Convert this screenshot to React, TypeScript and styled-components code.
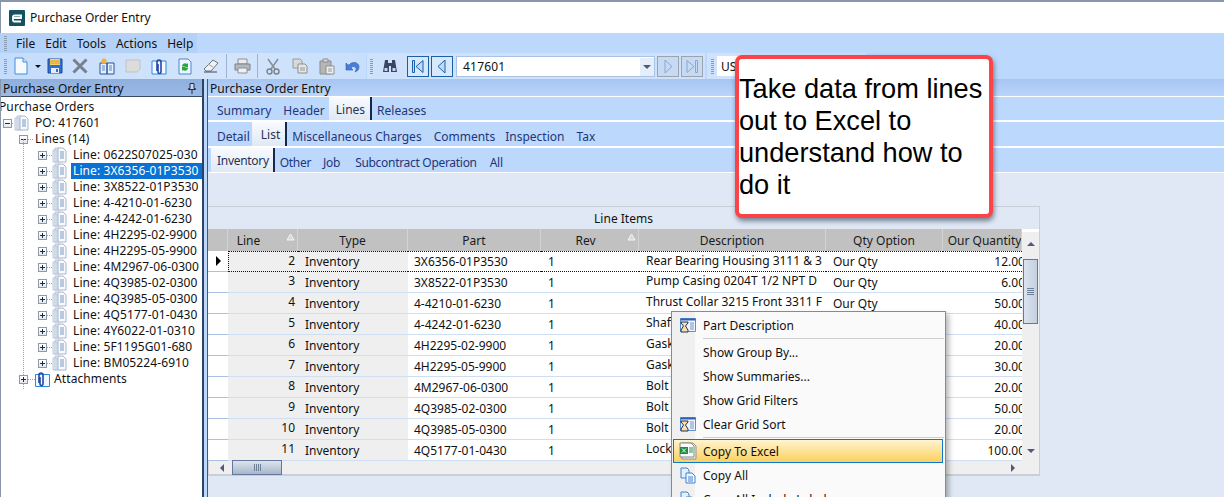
import * as React from "react";
import styled, { createGlobalStyle } from "styled-components";

const UI_FONT = `"Noto Sans", "Liberation Sans", sans-serif`;

const GlobalStyle = createGlobalStyle`
  html, body {
    margin: 0;
    padding: 0;
    overflow: hidden;
    background: #dfe8f4;
  }
  #root {
    width: 1224px;
    height: 497px;
  }
`;

/* icons */

const PageIcon = () => (
  <svg width="16" height="18" viewBox="0 0 16 18">
    <path d="M2 1h8l4 4v12H2z" fill="#f4faff" stroke="#3f8fd8" />
    <path d="M10 1v4h4" fill="#d4e8fb" stroke="#3f8fd8" />
  </svg>
);

const SaveIcon = () => (
  <svg width="16" height="16" viewBox="0 0 16 16">
    <path d="M1 1h14v14H1z" fill="#2f6fd0" stroke="#1c4a9c" />
    <path d="M3 1h10v6H3z" fill="#f6d36a" />
    <path d="M3 3h10M3 5h10" stroke="#d89a2c" />
    <path d="M4 10h8v5H4z" fill="#e8eef8" />
    <path d="M9 11h2v3H9z" fill="#2f6fd0" />
  </svg>
);

const CrossIcon = () => (
  <svg width="16" height="16" viewBox="0 0 16 16">
    <path d="M1.5 1.5l13 13M14.5 1.5l-13 13" stroke="#77808c" strokeWidth="3" />
  </svg>
);

const BookIcon = () => (
  <svg width="16" height="17" viewBox="0 0 16 17">
    <path d="M1 5h7v11H1zM8 5h7v11H8z" fill="#e6f0fc" stroke="#2452a4" />
    <path d="M3 8h3M3 10h3M3 12h3M10 8h3M10 10h3M10 12h3" stroke="#5b84c8" />
    <circle cx="5" cy="3" r="2.6" fill="#f6b132" />
  </svg>
);

const NoteIcon = () => (
  <svg width="16" height="14" viewBox="0 0 16 14">
    <path d="M1 1h14v9l-3 3H1z" fill="#dcdcdc" stroke="#c2c2c2" />
  </svg>
);

const ClipIcon = () => (
  <svg width="16" height="17" viewBox="0 0 16 17">
    <path d="M1 3h14v13H1z" fill="#f3f8ff" stroke="#2a8ae0" />
    <path
      d="M6 13V4a2 2 0 0 1 4 0v10a1.5 1.5 0 0 1-3 0V6"
      fill="none"
      stroke="#2647a8"
      strokeWidth="1.6"
    />
  </svg>
);

const RefreshIcon = () => (
  <svg width="16" height="17" viewBox="0 0 16 17">
    <path d="M2 1h9l3 3v12H2z" fill="#eef6ff" stroke="#4d86c8" />
    <path d="M5 8a3 3 0 0 1 5-2l1-1v4H7l1-1a2 2 0 0 0-2 1z" fill="#26a83a" />
    <path d="M11 10a3 3 0 0 1-5 2l-1 1V9h4l-1 1a2 2 0 0 0 2-1z" fill="#26a83a" />
  </svg>
);

const EraserIcon = () => (
  <svg width="16" height="14" viewBox="0 0 16 14">
    <path d="M10 1l5 3-7 8H3L1 10z" fill="#f2f2f2" stroke="#6b7280" />
    <path d="M1 13h13" stroke="#3d4a5c" />
    <path d="M5 5l5 3" stroke="#9aa3ae" />
  </svg>
);

const PrintIcon = () => (
  <svg width="17" height="16" viewBox="0 0 17 16">
    <path d="M4 1h9v5H4z" fill="#ececec" stroke="#8a8f96" />
    <path d="M1 6h15v6H1z" fill="#b4b8be" stroke="#7d8289" />
    <path d="M4 10h9v5H4z" fill="#f1f1f1" stroke="#8a8f96" />
  </svg>
);

const CutIcon = () => (
  <svg width="14" height="17" viewBox="0 0 14 17">
    <path d="M2 1l7 10M12 1L5 11" stroke="#8a9099" strokeWidth="1.6" />
    <circle cx="3.5" cy="13.5" r="2.5" fill="none" stroke="#7b828c" strokeWidth="1.4" />
    <circle cx="10.5" cy="13.5" r="2.5" fill="none" stroke="#7b828c" strokeWidth="1.4" />
  </svg>
);

const CopyIcon = () => (
  <svg width="16" height="16" viewBox="0 0 16 16">
    <path d="M1 1h7l2 2v7H1z" fill="#d9d9d9" stroke="#9a9a9a" />
    <path d="M6 6h7l2 2v7H6z" fill="#e6e6e6" stroke="#8f8f8f" />
    <path d="M8 10h5M8 12h5" stroke="#9a9a9a" />
  </svg>
);

const PasteIcon = () => (
  <svg width="16" height="17" viewBox="0 0 16 17">
    <path d="M1 3h11v13H1z" fill="#b5b5b5" stroke="#8b8b8b" />
    <path d="M4 1h5v3H4z" fill="#d9d9d9" stroke="#8b8b8b" />
    <path d="M7 8h8v8H7z" fill="#ededed" stroke="#8f8f8f" />
    <path d="M9 11h4M9 13h4" stroke="#9a9a9a" />
  </svg>
);

const UndoIcon = () => (
  <svg width="16" height="14" viewBox="0 0 16 14">
    <path
      d="M4 6c3-4 10-3 10 2 0 3-2 4-4 5 1-2 2-4 0-5-2-1-3 0-4 1l2 2H1V4l2 2z"
      fill="#4a7ed6"
      stroke="#2b5cb0"
      strokeWidth="0.6"
    />
  </svg>
);

const BinocularsIcon = () => (
  <svg width="16" height="14" viewBox="0 0 16 14">
    <path d="M3 1h3v3h4V1h3l2 12H9V7H7v6H1z" fill="#3a4566" />
    <path d="M2.5 9h3v3h-3zM10.5 9h3v3h-3z" fill="#c9d6ee" />
  </svg>
);

const NavArrow = ({ dir, bar, muted }: { dir: "l" | "r"; bar?: boolean; muted?: boolean }) => {
  const fill = muted ? "#c5daf4" : "#bcdcf8";
  const stroke = muted ? "#8aa8cc" : "#1a5fb0";
  return (
    <svg width="14" height="15" viewBox="0 0 14 15">
      {dir === "l" ? (
        <>
          {bar && <path d="M1.5 1.5h2v12h-2z" fill={fill} stroke={stroke} />}
          <path d={bar ? "M12 1.5v12L5 7.5z" : "M10 1v13L3 7.5z"} fill={fill} stroke={stroke} />
        </>
      ) : (
        <>
          <path d={bar ? "M2 1.5v12l7-6z" : "M4 1v13l7-6.5z"} fill={fill} stroke={stroke} />
          {bar && <path d="M10.5 1.5h2v12h-2z" fill={fill} stroke={stroke} />}
        </>
      )}
    </svg>
  );
};

const PinIcon = () => (
  <svg width="8" height="11" viewBox="0 0 8 11">
    <path d="M2 0.5h4v5h1.5v1h-7v-1H2zM4 6.5V11" fill="#c8d8f0" stroke="#20304c" />
  </svg>
);

const TreeDocIcon = () => (
  <svg width="15" height="16" viewBox="0 0 15 16">
    <path d="M1 3h4v12H1zM3 1h4v14H3z" fill="#eaf0f7" stroke="#b9c7d8" />
    <path d="M6 1h5l3 3v11H6z" fill="#f8fafd" stroke="#a4b6cc" />
    <path d="M8 5h4M8 7h4M8 9h4M8 11h4" stroke="#7b97bf" />
  </svg>
);

const AttachIcon = () => (
  <svg width="15" height="15" viewBox="0 0 15 15">
    <path d="M0.5 2.5h14v12H.5z" fill="#f2f8ff" stroke="#2a8ae0" />
    <path
      d="M4 11V3a2 2 0 0 1 4 0v9a1.5 1.5 0 0 1-3 0V5"
      fill="none"
      stroke="#2647a8"
      strokeWidth="1.6"
    />
  </svg>
);

const HourglassIcon = () => (
  <svg width="16" height="15" viewBox="0 0 16 15">
    <path d="M0.5 0.5h15v13H.5z" fill="#f3f7fd" stroke="#5f8ccb" />
    <path d="M.5 .5h15v2H.5z" fill="#2d62b4" />
    <path d="M10 5h4M10 7h4M10 9h4M10 11h4" stroke="#6f93c9" />
    <path d="M1 4h7v1L5.5 8 8 12v2H1v-2l2.5-4L1 5z" fill="#f6e3a4" stroke="#1f2c63" />
  </svg>
);

const ExcelIcon = () => (
  <svg width="18" height="18" viewBox="0 0 18 18">
    <path d="M3 1h11l3 3v13H3z" fill="#f2f2f2" stroke="#8f8f8f" />
    <path d="M1 1h11l3 3v11H1z" fill="#fbfbfb" stroke="#7f8a80" />
    <path d="M1 5h8v7H1z" fill="#1f8a45" />
    <path d="M3 6.5l4 4M7 6.5l-4 4" stroke="#fff" />
    <path d="M10 6h4M10 8h4M10 10h4" stroke="#2d9150" />
  </svg>
);

const CopyPagesIcon = () => (
  <svg width="16" height="17" viewBox="0 0 16 17">
    <path d="M1 1h6l2 2v8H1z" fill="#e4f0fd" stroke="#3f82d0" />
    <path d="M6 6h6l3 3v7H6z" fill="#f2f8ff" stroke="#3f82d0" />
    <path d="M8 10h5M8 12h5M8 14h5" stroke="#3f82d0" />
  </svg>
);

const Triangle = styled.span<{ $dir: "up" | "down" | "left" | "right"; $size?: number; $color?: string }>`
  width: 0;
  height: 0;
  display: block;
  border: ${(p) => p.$size ?? 4}px solid transparent;
  ${(p) =>
    p.$dir === "up"
      ? `border-top: 0; border-bottom-color: ${p.$color ?? "#4f5b7a"};`
      : p.$dir === "down"
      ? `border-bottom: 0; border-top-color: ${p.$color ?? "#4f5b7a"};`
      : p.$dir === "left"
      ? `border-left: 0; border-right-color: ${p.$color ?? "#4f5b7a"};`
      : `border-right: 0; border-left-color: ${p.$color ?? "#4f5b7a"};`}
`;

/* shell */

const Page = styled.div`
  position: relative;
  width: 1224px;
  height: 497px;
  overflow: hidden;
  display: flex;
  flex-direction: column;
  font-family: ${UI_FONT};
  font-size: 12px;
  color: #111;
  background: #bcd8fc;
`;

const TitleBar = styled.header`
  height: 31px;
  flex: none;
  display: flex;
  align-items: center;
  gap: 5px;
  padding-left: 9px;
  background: #fff;
  border-top: 2px solid #8a97ab;
  border-left: 1px solid #8a97ab;
`;

const Logo = styled.svg`
  margin-left: -1px;
  margin-top: 1px;
`;

const MenuStrip = styled.nav`
  height: 20px;
  flex: none;
  display: flex;
  background: #bcd8fc;
`;

const MenuGroup = styled.div`
  width: 197px;
  box-sizing: border-box;
  display: flex;
  align-items: center;
  gap: 9px;
  padding: 1px 0 0 4px;
  background: #b4d1f7;
`;

const Grip = styled.span`
  width: 3px;
  height: 15px;
  flex: none;
  background: repeating-linear-gradient(#8d9bb0 0 1px, transparent 1px 2px);
`;

const MenuItem = styled.span`
  margin-right: 1px;
`;

const ToolStrip = styled.div`
  height: 26px;
  flex: none;
  display: flex;
  align-items: stretch;
  background: #bcd8fc;
`;

const ToolGroup = styled.div<{ $width: number; $after: number; $pad: number; $light?: boolean }>`
  width: ${(p) => p.$width}px;
  box-sizing: border-box;
  flex: none;
  margin-right: ${(p) => p.$after}px;
  display: flex;
  align-items: center;
  padding-left: ${(p) => p.$pad}px;
  background: ${(p) =>
    p.$light ? "#cfe2fb" : "linear-gradient(90deg, #c4dcfb 0%, #d3e5fc 60%, #c8dffb 100%)"};
`;

const ToolButton = styled.span<{ $width?: number; $before?: number }>`
  width: ${(p) => p.$width ?? 26}px;
  height: 22px;
  flex: none;
  margin-left: ${(p) => p.$before ?? 0}px;
  display: flex;
  align-items: center;
  justify-content: center;
`;

const ToolDivider = styled.span`
  width: 1px;
  height: 24px;
  flex: none;
  margin: 0 2px;
  background: #9db3cf;
`;

const NavButton = styled.span<{ $muted?: boolean }>`
  width: 22px;
  height: 21px;
  box-sizing: border-box;
  flex: none;
  margin-right: 2px;
  display: flex;
  align-items: center;
  justify-content: center;
  border: 1px solid ${(p) => (p.$muted ? "#9aa3ae" : "#1a5fa8")};
  background: ${(p) => (p.$muted ? "#c6daf4" : "#d8e8fb")};
`;

const Combo = styled.div`
  width: 199px;
  height: 21px;
  box-sizing: border-box;
  flex: none;
  margin: 0 2px 0 1px;
  display: flex;
  align-items: center;
  justify-content: space-between;
  padding: 1px 0 0 6px;
  background: #fff;
  border: 1px solid #a9c3e6;
  letter-spacing: 0.2px;
`;

const ComboArrow = styled.span`
  width: 14px;
  height: 18px;
  display: flex;
  align-items: center;
  justify-content: center;
  background: #e6eff9;
`;

const CurrencyField = styled.div`
  width: 70px;
  height: 20px;
  margin-left: 3px;
  padding-left: 4px;
  display: flex;
  align-items: center;
  background: #fff;
`;

/* body */

const Body = styled.div`
  flex: 1;
  min-height: 0;
  display: flex;
`;

const LeftPanel = styled.aside`
  flex: none;
  display: flex;
  flex-direction: column;
  border-right: 2px solid #2c4366;
  border-left: 1px solid #8a97ab;
  box-sizing: border-box;
  width: 204px;
`;

const PanelHeader = styled.div<{ $main?: boolean }>`
  height: 17px;
  box-sizing: border-box;
  flex: none;
  display: flex;
  align-items: center;
  justify-content: space-between;
  padding: 1px 6px 0 2px;
  background: ${(p) =>
    p.$main ? "linear-gradient(#a6c5f1, #b9d5fb)" : "linear-gradient(#8fafdd, #9ab9e6)"};
`;

const Tree = styled.div`
  flex: 1;
  overflow: hidden;
  padding-top: 2px;
  background: #fff;
  border-top: 1px solid #3a4a60;
  white-space: nowrap;
  letter-spacing: 0.1px;
`;

const TreeRoot = styled.div`
  height: 16px;
  line-height: 16px;
  margin-left: -2px;
`;

const TreeChildren = styled.div<{ $left: number; $height: number }>`
  position: relative;
  margin-left: ${(p) => p.$left}px;
  &::before {
    content: "";
    position: absolute;
    left: 0;
    top: -8px;
    height: ${(p) => p.$height}px;
    border-left: 1px dotted #9aa3ae;
  }
`;

const TreeRow = styled.div<{ $pad: number }>`
  height: 16px;
  display: flex;
  align-items: center;
  padding-left: ${(p) => p.$pad}px;
`;

const Expander = styled.span`
  position: relative;
  width: 9px;
  height: 9px;
  flex: none;
  box-sizing: border-box;
  border: 1px solid #8f9aa8;
  background: linear-gradient(#fff, #e4e8ee);
  &::before {
    content: "";
    position: absolute;
    left: 1px;
    top: 3px;
    width: 5px;
    height: 1px;
    background: #1d2b4a;
  }
  &::after {
    content: "";
    position: absolute;
    left: 8px;
    top: 3px;
    width: 7px;
    border-top: 1px dotted #9aa3ae;
  }
`;

const ExpanderPlus = styled(Expander)`
  background:
    linear-gradient(#1d2b4a, #1d2b4a) 3px 1px / 1px 5px no-repeat,
    linear-gradient(#fff, #e4e8ee);
`;

const TreeIconSlot = styled.span<{ $before: number }>`
  position: relative;
  width: 15px;
  height: 16px;
  flex: none;
  margin-left: ${(p) => p.$before}px;
  display: flex;
  align-items: center;
  background: #fff;
`;

const TreeLabel = styled.span<{ $selected?: boolean; $offset?: number }>`
  position: relative;
  height: 16px;
  line-height: 16px;
  margin-left: ${(p) => p.$offset ?? 4}px;
  padding: 0 3px 0 2px;
  background: ${(p) => (p.$selected ? "#0a72d4" : "#fff")};
  color: ${(p) => (p.$selected ? "#fff" : "#111")};
  ${(p) => p.$selected && "width: 126px;"}
`;

const Splitter = styled.div`
  width: 3px;
  flex: none;
  background: #bcd8fc;
  border-right: 1px solid #3b5a8e;
`;

const MainPanel = styled.main`
  flex: 1;
  min-width: 0;
  display: flex;
  flex-direction: column;
  background: #dfe8f4;
`;

const TabStack = styled.div`
  flex: none;
  display: flex;
  flex-direction: column;
  gap: 2px;
  padding: 1px 0;
  background: #fff;
`;

const TabRow = styled.div<{ $height: number; $pad: number; $tight?: boolean }>`
  height: ${(p) => p.$height}px;
  display: flex;
  align-items: stretch;
  padding-left: ${(p) => p.$pad}px;
  background: #bcd8fc;
  ${(p) => p.$tight && "letter-spacing: -0.3px;"}
`;

const Tab = styled.span<{ $gap?: number }>`
  display: flex;
  align-items: center;
  box-sizing: border-box;
  margin-right: ${(p) => p.$gap ?? 12}px;
  padding-top: 4px;
  color: #23367a;
  white-space: nowrap;
`;

const ActiveTab = styled.span<{ $left: number; $right: number; $gap: number }>`
  display: flex;
  align-items: center;
  box-sizing: border-box;
  margin: 0 ${(p) => p.$gap}px 0 -2px;
  padding: 1px ${(p) => p.$right}px 0 ${(p) => p.$left}px;
  color: #2b3150;
  white-space: nowrap;
  background: linear-gradient(#f8fbff, #dfe8f4);
  border-right: 2px solid #14284f;
`;

const Content = styled.div`
  flex: 1;
  min-height: 0;
  padding-top: 33px;
`;

const GroupBox = styled.section`
  width: 832px;
  box-sizing: border-box;
  border: 1px solid #c9cfd6;
  border-left: 0;
  border-bottom-width: 2px;
`;

const GroupTitle = styled.div`
  height: 22px;
  display: flex;
  align-items: center;
  justify-content: center;
  color: #111;
`;

const GridWrap = styled.div`
  display: flex;
`;

const GridMain = styled.div`
  width: 814px;
  flex: none;
  display: flex;
  flex-direction: column;
`;

const COLUMNS = "20px 70px 110px 133px 98px 187px 117px 79px";

const HeaderRow = styled.div`
  height: 22px;
  display: grid;
  grid-template-columns: ${COLUMNS};
  background: #c1c1c1;
`;

const HeaderCell = styled.div<{ $left?: number; $right?: number }>`
  position: relative;
  box-sizing: border-box;
  display: flex;
  align-items: center;
  justify-content: center;
  padding: 0 ${(p) => p.$right ?? 0}px 0 ${(p) => p.$left ?? 0}px;
  white-space: nowrap;
  overflow: hidden;
  border-right: 1px solid #d2d2d2;
  color: #1a1a1a;
`;

const SortMark = styled.span`
  position: absolute;
  right: 2px;
  top: 4px;
  display: flex;
`;

const DataRow = styled.div`
  height: 21px;
  display: grid;
  grid-template-columns: ${COLUMNS};
`;

const SelectorCell = styled.div`
  display: flex;
  align-items: center;
  justify-content: center;
  background: #fff;
  border-bottom: 1px solid #a9c1e2;
`;

const Cell = styled.div<{
  $shaded?: boolean;
  $align?: "left" | "right";
  $raised?: boolean;
  $focus?: boolean;
  $first?: boolean;
}>`
  box-sizing: border-box;
  display: flex;
  align-items: center;
  justify-content: ${(p) => (p.$align === "right" ? "flex-end" : "flex-start")};
  padding: ${(p) => (p.$raised ? "0 3px 3px 7px" : "0 3px 0 7px")};
  overflow: hidden;
  white-space: nowrap;
  background: ${(p) => (p.$shaded ? "#efefef" : "#fff")};
  border-bottom: 1px solid #cfdff3;
  ${(p) => p.$focus && "border-top: 1px dotted #111; border-bottom: 1px dotted #111;"}
  ${(p) => p.$first && "border-left: 1px dotted #111;"}
`;

const PartCell = styled(Cell)`
  padding-left: 6px;
`;

const ClippedNumber = styled.span`
  margin-right: -6px;
`;

const HScroll = styled.div`
  height: 13px;
  display: flex;
  align-items: center;
  padding: 0 7px 0 11px;
  background: #efefef;
  border-left: 1px solid #d5d5d5;
`;

const HThumb = styled.span`
  width: 50px;
  height: 15px;
  box-sizing: border-box;
  margin-left: 8px;
  margin-top: -1px;
  display: flex;
  align-items: center;
  justify-content: center;
  background: linear-gradient(#dbe3ee, #a8b6ca);
  border: 1px solid #64789c;
`;

const GripLines = styled.span<{ $vertical?: boolean }>`
  display: block;
  width: 7px;
  height: 7px;
  background: repeating-linear-gradient(
    ${(p) => (p.$vertical ? "180deg" : "90deg")},
    #6e7f99 0 1px,
    transparent 1px 2px
  );
`;

const ScrollSpacer = styled.span`
  flex: 1;
`;

const VScroll = styled.div`
  width: 17px;
  flex: none;
  display: flex;
  flex-direction: column;
  align-items: center;
  background: #efefef;
  border-top: 3px solid #fff;
`;

const VArrow = styled.span<{ $top: number; $bottom: number }>`
  flex: none;
  margin: ${(p) => p.$top}px 0 ${(p) => p.$bottom}px;
`;

const VThumb = styled.span`
  width: 15px;
  height: 65px;
  flex: none;
  box-sizing: border-box;
  display: flex;
  align-items: center;
  justify-content: center;
  background: linear-gradient(90deg, #dbe3ee, #c3cfe0);
  border: 1px solid #64789c;
`;

/* overlays */

const ContextMenu = styled.div`
  position: absolute;
  left: 671px;
  top: 311px;
  width: 275px;
  height: 200px;
  box-sizing: border-box;
  padding: 1px;
  border: 1px solid #8a8a8a;
  background: linear-gradient(90deg, #f0f0f0 23px, #fafafa 23px);
  box-shadow: 3px 3px 5px rgba(0, 0, 0, 0.28);
`;

const MenuRow = styled.div<{ $active?: boolean }>`
  height: 24px;
  box-sizing: border-box;
  display: flex;
  align-items: center;
  ${(p) =>
    p.$active &&
    "background: linear-gradient(#fff4cf, #fbd05f); border: 1px solid #0a78d0; margin-right: 1px;"}
`;

const MenuIconSlot = styled.span<{ $active?: boolean }>`
  width: ${(p) => (p.$active ? 30 : 31)}px;
  flex: none;
  display: flex;
  justify-content: center;
  margin-left: -1px;
`;

const MenuDivider = styled.div`
  height: 1px;
  margin: 1px 0 1px 30px;
  background: #cfcfcf;
`;

const Callout = styled.aside`
  position: absolute;
  left: 735px;
  top: 55px;
  width: 258px;
  height: 163px;
  box-sizing: border-box;
  padding: 14px 0 0 0;
  border: 4px solid #fb4448;
  border-radius: 7px;
  background: #fff;
  box-shadow: 1px 3px 5px rgba(30, 40, 60, 0.55);
  font-family: "Liberation Sans", Arial, sans-serif;
  font-size: 27.2px;
  line-height: 32px;
  color: #000;
`;

type LineRow = { line: number; part: string; desc: string; qty: string };

const rows: LineRow[] = [
  { line: 2, part: "3X6356-01P3530", desc: "Rear Bearing Housing 3111 & 3", qty: "12.00" },
  { line: 3, part: "3X8522-01P3530", desc: "Pump Casing 0204T 1/2 NPT D", qty: "6.00" },
  { line: 4, part: "4-4210-01-6230", desc: "Thrust Collar 3215 Front 3311 F", qty: "50.00" },
  { line: 5, part: "4-4242-01-6230", desc: "Shaft", qty: "40.00" },
  { line: 6, part: "4H2295-02-9900", desc: "Gasket", qty: "20.00" },
  { line: 7, part: "4H2295-05-9900", desc: "Gasket", qty: "30.00" },
  { line: 8, part: "4M2967-06-0300", desc: "Bolt", qty: "20.00" },
  { line: 9, part: "4Q3985-02-0300", desc: "Bolt", qty: "50.00" },
  { line: 10, part: "4Q3985-05-0300", desc: "Bolt", qty: "20.00" },
  { line: 11, part: "4Q5177-01-0430", desc: "Lock", qty: "100.00" },
];

const treeLines = [
  "0622S07025-030",
  "3X6356-01P3530",
  "3X8522-01P3530",
  "4-4210-01-6230",
  "4-4242-01-6230",
  "4H2295-02-9900",
  "4H2295-05-9900",
  "4M2967-06-0300",
  "4Q3985-02-0300",
  "4Q3985-05-0300",
  "4Q5177-01-0430",
  "4Y6022-01-0310",
  "5F1195G01-680",
  "BM05224-6910",
];

const SortArrow = () => (
  <SortMark>
    <svg width="9" height="8" viewBox="0 0 9 8">
      <path d="M4.5 1L8 7H1z" fill="#d8d8d8" stroke="#f6f6f6" />
    </svg>
  </SortMark>
);

export default function App() {
  return (
    <Page>
      <GlobalStyle />
      <TitleBar>
        <Logo width="16" height="16" viewBox="0 0 16 16">
          <rect width="16" height="16" rx="1" fill="#14525f" />
          <path
            d="M4 8h8V5.5H5.2A1.2 1.2 0 0 0 4 6.7v3.6a1.2 1.2 0 0 0 1.2 1.2H12"
            fill="none"
            stroke="#fff"
            strokeWidth="1.8"
          />
        </Logo>
        Purchase Order Entry
      </TitleBar>
      <MenuStrip>
        <MenuGroup>
          <Grip />
          <MenuItem>File</MenuItem>
          <MenuItem>Edit</MenuItem>
          <MenuItem>Tools</MenuItem>
          <MenuItem>Actions</MenuItem>
          <MenuItem>Help</MenuItem>
        </MenuGroup>
      </MenuStrip>
      <ToolStrip>
        <ToolGroup $width={366} $after={1} $pad={4}>
          <Grip />
          <ToolButton $width={28}>
            <PageIcon />
          </ToolButton>
          <ToolButton $width={6}>
            <Triangle $dir="down" $size={3} $color="#111" />
          </ToolButton>
          <ToolButton $width={28}>
            <SaveIcon />
          </ToolButton>
          <ToolButton $width={22}>
            <CrossIcon />
          </ToolButton>
          <ToolButton $before={3}>
            <BookIcon />
          </ToolButton>
          <ToolButton $width={25}>
            <NoteIcon />
          </ToolButton>
          <ToolButton $width={27}>
            <ClipIcon />
          </ToolButton>
          <ToolButton>
            <RefreshIcon />
          </ToolButton>
          <ToolButton>
            <EraserIcon />
          </ToolButton>
          <ToolDivider />
          <ToolButton>
            <PrintIcon />
          </ToolButton>
          <ToolDivider />
          <ToolButton>
            <CutIcon />
          </ToolButton>
          <ToolButton $width={28}>
            <CopyIcon />
          </ToolButton>
          <ToolButton>
            <PasteIcon />
          </ToolButton>
          <ToolButton>
            <UndoIcon />
          </ToolButton>
        </ToolGroup>
        <ToolGroup $width={338} $after={2} $pad={3} $light>
          <Grip />
          <ToolButton $width={34}>
            <BinocularsIcon />
          </ToolButton>
          <NavButton>
            <NavArrow dir="l" bar />
          </NavButton>
          <NavButton>
            <NavArrow dir="l" />
          </NavButton>
          <Combo>
            417601
            <ComboArrow>
              <Triangle $dir="down" $size={4} />
            </ComboArrow>
          </Combo>
          <NavButton $muted>
            <NavArrow dir="r" muted />
          </NavButton>
          <NavButton $muted>
            <NavArrow dir="r" bar muted />
          </NavButton>
        </ToolGroup>
        <ToolGroup $width={159} $after={0} $pad={4} $light>
          <Grip />
          <CurrencyField>USD</CurrencyField>
        </ToolGroup>
      </ToolStrip>
      <Body>
        <LeftPanel>
          <PanelHeader>
            Purchase Order Entry
            <PinIcon />
          </PanelHeader>
          <Tree>
            <TreeRoot>Purchase Orders</TreeRoot>
            <TreeRow $pad={2}>
              <Expander />
              <TreeIconSlot $before={2}>
                <TreeDocIcon />
              </TreeIconSlot>
              <TreeLabel>PO: 417601</TreeLabel>
            </TreeRow>
            <TreeRow $pad={18}>
              <Expander />
              <TreeLabel $offset={5}>Lines (14)</TreeLabel>
            </TreeRow>
            <TreeChildren $left={22} $height={250}>
              {treeLines.map((name, i) => (
                <TreeRow key={name} $pad={15}>
                  <ExpanderPlus />
                  <TreeIconSlot $before={5}>
                    <TreeDocIcon />
                  </TreeIconSlot>
                  <TreeLabel $selected={i === 1}>Line: {name}</TreeLabel>
                </TreeRow>
              ))}
            </TreeChildren>
            <TreeRow $pad={18}>
              <ExpanderPlus />
              <TreeIconSlot $before={7}>
                <AttachIcon />
              </TreeIconSlot>
              <TreeLabel $offset={2}>Attachments</TreeLabel>
            </TreeRow>
          </Tree>
        </LeftPanel>
        <Splitter />
        <MainPanel>
          <PanelHeader $main>Purchase Order Entry</PanelHeader>
          <TabStack>
            <TabRow $height={23} $pad={9}>
              <Tab>Summary</Tab>
              <Tab $gap={6}>Header</Tab>
              <ActiveTab $left={7} $right={5} $gap={5}>
                Lines
              </ActiveTab>
              <Tab>Releases</Tab>
            </TabRow>
            <TabRow $height={24} $pad={9}>
              <Tab $gap={4}>Detail</Tab>
              <ActiveTab $left={9} $right={5} $gap={5}>
                List
              </ActiveTab>
              <Tab>Miscellaneous Charges</Tab>
              <Tab $gap={10}>Comments</Tab>
              <Tab $gap={12}>Inspection</Tab>
              <Tab>Tax</Tab>
            </TabRow>
            <TabRow $height={24} $pad={5} $tight>
              <ActiveTab $left={6} $right={4} $gap={5}>
                Inventory
              </ActiveTab>
              <Tab>Other</Tab>
              <Tab $gap={15}>Job</Tab>
              <Tab $gap={13}>Subcontract Operation</Tab>
              <Tab>All</Tab>
            </TabRow>
          </TabStack>
          <Content>
            <GroupBox>
              <GroupTitle>Line Items</GroupTitle>
              <GridWrap>
                <GridMain>
                  <HeaderRow>
                    <HeaderCell />
                    <HeaderCell $right={28}>
                      Line
                      <SortArrow />
                    </HeaderCell>
                    <HeaderCell>Type</HeaderCell>
                    <HeaderCell>Part</HeaderCell>
                    <HeaderCell $right={8}>
                      Rev
                      <SortArrow />
                    </HeaderCell>
                    <HeaderCell>Description</HeaderCell>
                    <HeaderCell>Qty Option</HeaderCell>
                    <HeaderCell $left={5}>Our Quantity</HeaderCell>
                  </HeaderRow>
                  {rows.map((r, i) => (
                    <DataRow key={r.line}>
                      <SelectorCell>
                        {i === 0 && <Triangle $dir="right" $size={5} $color="#000" />}
                      </SelectorCell>
                      <Cell $shaded $raised $align="right" $focus={i === 0} $first={i === 0}>
                        {r.line}
                      </Cell>
                      <Cell $shaded $focus={i === 0}>
                        Inventory
                      </Cell>
                      <PartCell $focus={i === 0}>{r.part}</PartCell>
                      <Cell $focus={i === 0}>1</Cell>
                      <Cell $raised $focus={i === 0}>
                        {r.desc}
                      </Cell>
                      <Cell $focus={i === 0}>Our Qty</Cell>
                      <Cell $align="right" $focus={i === 0}>
                        <ClippedNumber>{r.qty}</ClippedNumber>
                      </Cell>
                    </DataRow>
                  ))}
                  <HScroll>
                    <Triangle $dir="left" $size={4} />
                    <HThumb>
                      <GripLines />
                    </HThumb>
                    <ScrollSpacer />
                    <Triangle $dir="right" $size={4} />
                  </HScroll>
                </GridMain>
                <VScroll>
                  <VArrow $top={10} $bottom={13}>
                    <Triangle $dir="up" $size={4} />
                  </VArrow>
                  <VThumb>
                    <GripLines $vertical />
                  </VThumb>
                  <ScrollSpacer />
                  <VArrow $top={0} $bottom={21}>
                    <Triangle $dir="down" $size={4} />
                  </VArrow>
                </VScroll>
              </GridWrap>
            </GroupBox>
          </Content>
        </MainPanel>
      </Body>

      <ContextMenu>
        <MenuRow>
          <MenuIconSlot>
            <HourglassIcon />
          </MenuIconSlot>
          Part Description
        </MenuRow>
        <MenuDivider />
        <MenuRow>
          <MenuIconSlot />
          Show Group By...
        </MenuRow>
        <MenuRow>
          <MenuIconSlot />
          Show Summaries...
        </MenuRow>
        <MenuRow>
          <MenuIconSlot />
          Show Grid Filters
        </MenuRow>
        <MenuRow>
          <MenuIconSlot>
            <HourglassIcon />
          </MenuIconSlot>
          Clear Grid Sort
        </MenuRow>
        <MenuDivider />
        <MenuRow $active>
          <MenuIconSlot $active>
            <ExcelIcon />
          </MenuIconSlot>
          Copy To Excel
        </MenuRow>
        <MenuRow>
          <MenuIconSlot>
            <CopyPagesIcon />
          </MenuIconSlot>
          Copy All
        </MenuRow>
        <MenuRow>
          <MenuIconSlot>
            <CopyPagesIcon />
          </MenuIconSlot>
          Copy All Include Labels
        </MenuRow>
      </ContextMenu>

      <Callout>
        Take data from lines out to Excel to understand how to do it
      </Callout>
    </Page>
  );
}
